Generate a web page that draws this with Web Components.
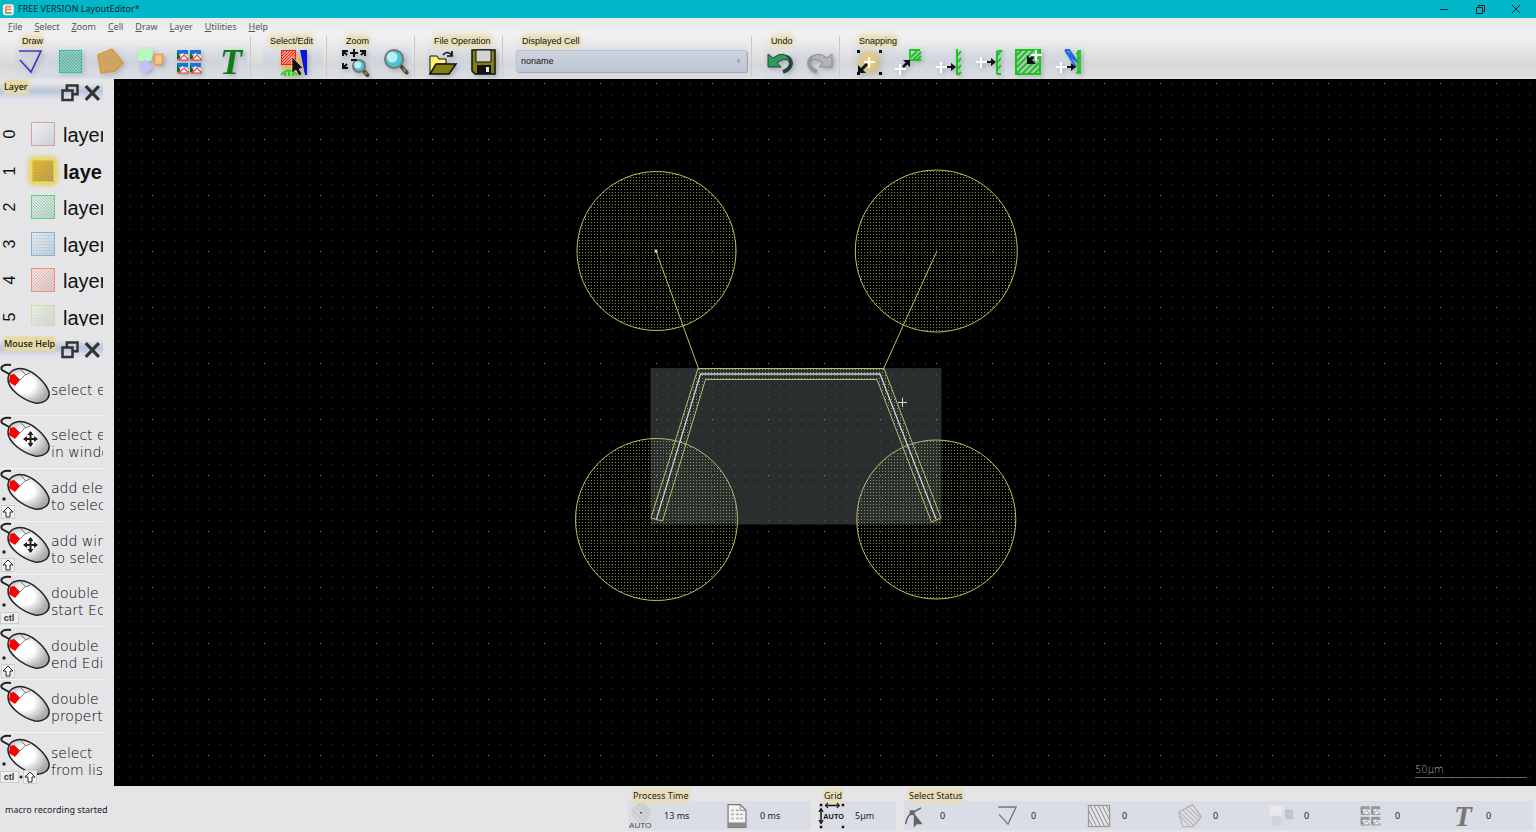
<!DOCTYPE html>
<html lang="en">
<head>
<meta charset="utf-8">
<title>LayoutEditor</title>
<style>
    html, body {
        height: 100%;
        margin: 0;
    }
    body {
        font: 9px/12px "Noto Sans", "Open Sans", sans-serif;
        color: #222;
        background: #e5e5e8;
        overflow: hidden;
    }
</style>
</head>
<body>
<layout-editor></layout-editor>

<script>
// hatch pattern helper, one per icon shadow root
const hatch = (color, path, size = 3) => `<defs><pattern id="h" width="${size}" height="${size}" patternUnits="userSpaceOnUse"><path d="${path}" stroke="${color}" fill="none"/></pattern></defs>`;

const tile = (x, y) => `<g transform="translate(${x} ${y})">
    <path d="M0 0H11V4H0Z" fill="#1277d8"/><path d="M0 2L5 9H0Z" fill="#0d6b28"/>
    <path d="M5 3L11 6V10H2Z" fill="#fff"/><path d="M0 10H11V9L7 5L2 10" fill="none" stroke="#e33" stroke-width="1.2"/></g>`;

const lens = (x, y, r) => `<path d="M${x + r * .7} ${y + r * .7}l${r * .7} ${r * .8}" stroke="#444" stroke-width="4" stroke-linecap="round"/>
    <path d="M${x + r} ${y + r}l${r * .3} ${r * .4}" stroke="#a08a28" stroke-width="2"/>
    <circle cx="${x}" cy="${y}" r="${r}" fill="#4cc3d6" stroke="#777" stroke-width="2"/>
    <circle cx="${x - r * .2}" cy="${y - r * .2}" r="${r * .6}" fill="#b5f0f6"/>`;

const plus = (x, y) => `<path d="M${x - 5} ${y}h11M${x} ${y - 5}v11" stroke="#fff" stroke-width="2"/>`;
const arrowRight = (x, y) => `<path d="M${x} ${y}h6" stroke="#111" stroke-width="2"/><path d="M${x + 4} ${y - 4}l5 4l-5 4z" fill="#111"/>`;
const corners = (a, b, c, d) => `<path d="M${a} ${b}h3v3h-3zM${c} ${b}h3v3h-3zM${a} ${d}h3v3h-3zM${c} ${d}h3v3h-3z" fill="#111"/>`;

const ICONS = {
    app: `<rect x="2" y="3" width="27" height="27" rx="6" fill="#eef4ee"/><path d="M9 9V24H23M9 9H23M9 16H23" fill="none" stroke="#ef8354" stroke-width="4"/><path d="M9 25H24" stroke="#4ab56c" stroke-width="3"/>`,
    polyline: `<path d="M4 5H26L16 26L5 14" fill="none" stroke="currentColor" stroke-width="1.7"/>`,
    rect: hatch('currentColor', 'M0 0L3 3M-1 2L1 4M2 -1L4 1') + `<rect x="4.5" y="4.5" width="22" height="22" fill="currentColor" fill-opacity=".2"/><rect x="4.5" y="4.5" width="22" height="22" fill="url(#h)" stroke="currentColor"/>`,
    polygon: hatch('currentColor', 'M0 0L3 3M-1 2L1 4M2 -1L4 1') + `<path d="M3 9L17 3L28 17L20 25L6 27Z" fill="currentColor" fill-opacity=".45"/><path d="M3 9L17 3L28 17L20 25L6 27Z" fill="url(#h)" stroke="currentColor" stroke-width="1.4"/>`,
    rectPlain: `<rect x="3" y="3" width="26" height="26" fill="#e6e6e8" stroke="#999" stroke-width="1.500"/><path d="M3 19L8 29M3 9L13 29M5 3L18 29M10 3L23 29M15 3L28 29M20 3L29 21M25 3L29 11" stroke="#999" stroke-width="1.300"/>`,
    polygonPlain: `<path d="M2 11L19 2L30 17L20 29H7Z" fill="#dfe0e4" stroke="#b2b2b4" stroke-width="1.500"/><path d="M4 16L16 29M3 11L21 28M7 9L24 25M11 7L27 22M15 5L29 19" stroke="#b2b2b4" stroke-width="1.300"/>`,
    shapes: `<path d="M3 3H19L16 15H3Z" fill="#b9f7bb"/><path d="M10 13L18 21L10 28L3 21Z" fill="#c2c2f6"/><rect x="19.500" y="8.500" width="8" height="10" fill="#f6c48c" stroke="#ee9a45" stroke-width="1.5"/>`,
    shapesPlain: `<path d="M2 3H20L16 17H2Z" fill="#e8e8ea"/><circle cx="11" cy="22" r="7" fill="#d2d3d8"/><rect x="21" y="8" width="10" height="12" fill="#c3c4c9"/>`,
    cells: tile(2, 4) + tile(15, 4) + tile(2, 17) + tile(15, 17),
    text: `<text x="5" y="28" font-family="Liberation Serif, serif" font-size="36" font-weight="bold" font-style="italic" fill="currentColor">T</text>`,
    edit: hatch('#e22', 'M0 3L3 0') + `<defs><radialGradient id="g"><stop offset=".2" stop-color="#e9bd55"/><stop offset="1" stop-color="#e9bd55" stop-opacity="0"/></radialGradient></defs>
        <circle cx="16" cy="18" r="16" fill="url(#g)"/><rect x="4.500" y="4.500" width="14" height="14" fill="#ff9a80"/><rect x="4.500" y="4.500" width="14" height="14" fill="url(#h)" stroke="#e22"/>
        <path d="M23 4H30V29H28Z" fill="#0a12e8"/><path d="M4 29Q12 20 20 29M8 25V30M12 24V30M16 25V30" fill="none" stroke="#1de01d" stroke-width="2"/>
        <path d="M15 11V27L19 24L22 30L25 28L22 23L26 22Z" fill="#111" stroke="#fff" stroke-width=".5"/>`,
    fit: lens(20, 20, 6) + `<path d="M4 10V5H9M5 6L8 9M21 5H26V10M25 6L22 9M4 17V22H9M5 21L8 18M15 3V11M11 7H19M12 14H18" fill="none" stroke="#111" stroke-width="2"/>`,
    zoom: lens(15, 13, 9),
    open: `<path d="M3 28V10H10L12 13H19V18H10Z" fill="#fff36b" stroke="#111"/><path d="M3 28L9 18H29L22 28Z" fill="#84800e" stroke="#111" stroke-width="1.500"/><path d="M16 9Q20 4 25 9M25 5V10H20" fill="none" stroke="#111" stroke-width="1.700"/>`,
    save: `<path d="M5 4H28V28H8L5 25Z" fill="#84800e" stroke="#111" stroke-width="1.500"/><path d="M9 4H24V16H9Z" fill="#d2d2d2" stroke="#111"/><path d="M10 19H24V28H10Z" fill="#111"/><path d="M19 21H22V26H19Z" fill="#e8e8e8"/>`,
    undo: `<path d="M13 13Q25 7 27 17Q27 23 19 26" fill="none" stroke="#28443c" stroke-width="4"/><path d="M4 8V21H17L13 17Q20 11 26 15Q21 3 9 12Z" fill="#2f9a5c" stroke="#1e4a36"/>`,
    redo: `<path d="M19 13Q7 7 5 17Q5 23 13 26" fill="none" stroke="#999" stroke-width="4"/><path d="M28 8V21H15L19 17Q12 11 6 15Q11 3 23 12Z" fill="#b5b5b5" stroke="#8b8b8b"/>`,
    snapGrid: `<defs><radialGradient id="g"><stop offset=".3" stop-color="#e6cb78"/><stop offset="1" stop-color="#e6cb78" stop-opacity="0"/></radialGradient></defs><circle cx="17" cy="16" r="15" fill="url(#g)"/>` + corners(5, 4, 27, 26) + plus(17, 16) + `<path d="M15 18L9 24" stroke="#111" stroke-width="3"/><path d="M6 19V27H14Z" fill="#111"/>`,
    snapCorner: `<path d="M18 15V4H28M17 14H29M19 11L26 4M21 14L29 6M25 14L29 10" fill="none" stroke="#17c817" stroke-width="1.800"/>` + plus(8, 23) + `<path d="M11 21L15 17" stroke="#111" stroke-width="2.500"/><path d="M11 14H18V21Z" fill="#111"/>`,
    snapEdge: `<path d="M25 3V29M29 5L25 10M29 12L25 17M29 19L25 24M26 29L29 26" fill="none" stroke="#17c817" stroke-width="2"/>` + plus(9, 21) + arrowRight(15, 21),
    snapPoint: `<path d="M25 5V28M25 5H29L25 10M29 12L25 17M29 19L25 24M25 28H29" fill="none" stroke="#17c817" stroke-width="2"/>` + plus(9, 16) + arrowRight(15, 16),
    snapShape: `<rect x="4" y="4" width="24" height="24" fill="none" stroke="#17c817" stroke-width="2"/><path d="M4 10L10 4M4 16L16 4M4 22L22 4M4 28L28 4M10 28L28 10M16 28L28 16M22 28L28 22" stroke="#17c817" stroke-width="2"/>` + plus(24, 9) + `<path d="M21 11L17 15" stroke="#111" stroke-width="3"/><path d="M15 9V18H24Z" fill="#111"/>`,
    snapLine: `<path d="M13 4L24 21M17 4L26 17M13 4H18M15 6L24 15" fill="none" stroke="#1d68e0" stroke-width="2"/><path d="M26 4V28M28 4V28M24 8L29 5M24 14L29 11M24 27L29 24" stroke="#17c817" stroke-width="1.600"/>` + plus(9, 21) + arrowRight(15, 21),
    timeAuto: `<circle cx="16" cy="12" r="12" fill="#d3d4d8"/><path d="M5 8L20 23M8 4L24 20M12 1L27 16M17 1L28 12" stroke="#bbb"/><text x="15" y="31" text-anchor="middle" font-family="Liberation Sans, sans-serif" font-size="10" fill="#444">AUTO</text><circle cx="16" cy="12" r="1"/>`,
    sheet: `<path d="M5 2H20L27 9V30H5Z" fill="#f4f4f4" stroke="#777" stroke-width="1.500"/><path d="M20 3V9H26" fill="none" stroke="#777"/><path d="M9 9H12M15 9H18M9 14H12M15 14H18M20 14H23M9 19H12M15 19H18M20 19H23" stroke="#aaa" stroke-width="2"/><path d="M5 24H27V30H5Z" fill="#8a8a8a"/>`,
    gridAuto: corners(1, 1, 28, 28) + `<path d="M8 3H25M2.500 7V25" stroke="#111" stroke-width="1.800"/><path d="M11 0L8 3L11 6M22 0L25 3L22 6M0 11L2.500 7L5 11M0 21L2.500 25L5 21" fill="none" stroke="#111" stroke-width="1.500"/><text x="18" y="20" text-anchor="middle" font-family="Liberation Sans, sans-serif" font-size="9" font-weight="bold" fill="#111">AUTO</text>`,
    node: `<path d="M2 26Q4 15 10 12L21 6" fill="none" stroke="#666" stroke-width="1.800"/><path d="M7 9H13V15H7Z" fill="#666"/><path d="M12 12V30L16 26H23Z" fill="#666"/>`,
    restore: `<path d="M11 11V4H28V18H21M4 12H20V27H4Z" fill="none" stroke="#333" stroke-width="4"/>`,
    close: `<path d="M6 5L27 27M27 5L6 27" stroke="#333" stroke-width="5" fill="none"/>`
};

/** Icon drawn from the ICONS table. */
class UiIcon extends HTMLElement {
    constructor() {
        super();
        this.attachShadow({ mode: 'open' });
    }

    connectedCallback() {
        this.shadowRoot.innerHTML = `
            <style>
                :host { display: block; width: 32px; height: 32px; flex: none; }
                svg { display: block; width: 100%; height: 100%; overflow: visible; }
            </style>
            <svg viewBox="0 0 32 32" aria-hidden="true">${ICONS[this.getAttribute('name')] || ''}</svg>
        `;
    }
}

/** Window title row with its three window controls. */
class TitleBar extends HTMLElement {
    constructor() {
        super();
        this.attachShadow({ mode: 'open' });
        this.shadowRoot.innerHTML = `
            <style>
                :host { display: flex; align-items: center; height: 18px; padding-right: 2px; background: #02b8c8; color: #0b2529; }
                ui-icon { width: 13px; height: 13px; margin: 0 3px 0 2px; }
                .title { flex: 1; }
                button { width: 36px; height: 18px; padding: 0; border: 0; background: none; display: grid; place-items: center; }
                svg { width: 10px; height: 10px; fill: none; stroke: #0b2529; }
            </style>
            <ui-icon name="app"></ui-icon>
            <span class="title"><slot></slot></span>
            <button aria-label="Minimize"><svg><path d="M1 5.500H9"/></svg></button>
            <button aria-label="Restore"><svg><path d="M1.500 3.500H7.500V9.500H1.500ZM3.500 3V1.500H9.500V7.500H8"/></svg></button>
            <button aria-label="Close"><svg><path d="M1 1L9 9M9 1L1 9"/></svg></button>
        `;
    }
}

class MenuBar extends HTMLElement {
    constructor() {
        super();
        this.attachShadow({ mode: 'open' });
    }

    connectedCallback() {
        const items = this.getAttribute('items').split(',');
        this.shadowRoot.innerHTML = `
            <style>
                :host { display: block; }
                nav { display: flex; gap: 12px; height: 18px; align-items: center; padding-left: 8px; }
                button { border: 0; padding: 0; background: none; font: inherit; color: #555; }
                u { text-underline-offset: 1px; }
            </style>
            <nav>${items.map(t => `<button><u>${t[0]}</u>${t.slice(1)}</button>`).join('')}</nav>
        `;
    }
}

/** Captioned group of the toolbar, tools are slotted in. */
class ToolGroup extends HTMLElement {
    constructor() {
        super();
        this.attachShadow({ mode: 'open' });
    }

    connectedCallback() {
        this.shadowRoot.innerHTML = `
            <style>
                :host { display: block; box-sizing: border-box; position: relative; font-family: "Liberation Sans", Arial, sans-serif; }
                :host::after { content: ""; position: absolute; right: 0; top: 0; bottom: 2px; border-right: 1px solid #c8c9cc; }
                :host(:last-child)::after { border: 0; }
                .caption { display: block; height: 10px; line-height: 10px; padding-left: 11px; color: #111; }
                .caption span { background: #e9dfba; box-shadow: 0 0 4px 2px #e9dfba; border-radius: 4px; }
                .tools { display: flex; justify-content: center; margin: 0 4px; height: 32px; background: linear-gradient(#e3e5ea, #d0d4dc 45%, #dadde3); }
            </style>
            <span class="caption"><span>${this.getAttribute('caption')}</span></span>
            <div class="tools"><slot></slot></div>
        `;
    }
}

class ToolButton extends HTMLElement {
    constructor() {
        super();
        this.attachShadow({ mode: 'open' });
    }

    connectedCallback() {
        const icon = this.getAttribute('icon');
        this.shadowRoot.innerHTML = `
            <style>
                :host { display: block; }
                button { display: grid; place-items: center; width: 40px; height: 32px; padding: 0; border: 0; background: none; color: inherit; }
                ui-icon { filter: drop-shadow(2px 2px 2px rgba(60, 70, 90, .3)); }
            </style>
            <button aria-label="${icon}"><ui-icon name="${icon}"></ui-icon></button>
        `;
    }
}

class CellSelect extends HTMLElement {
    constructor() {
        super();
        this.attachShadow({ mode: 'open' });
        this.shadowRoot.innerHTML = `
            <style>
                :host { display: block; position: relative; margin-top: 4px; }
                select { appearance: none; width: 231px; height: 22px; padding: 0 4px; border: 1px solid #bcc2cd; border-radius: 2px;
                    background: linear-gradient(#ccd3de, #bec7d5); box-shadow: 1px 1px 1px #9fa6b3; font: inherit; color: #111; }
                svg { position: absolute; right: 6px; top: 9px; width: 5px; height: 5px; pointer-events: none; }
            </style>
            <select aria-label="Displayed Cell"><option>noname</option></select>
            <svg><path d="M1 1H4M1 3H4" stroke="#6c8db8"/></svg>
        `;
    }
}

/** Dock panel: caption, float and close buttons, slotted content. */
class DockPanel extends HTMLElement {
    constructor() {
        super();
        this.attachShadow({ mode: 'open' });
    }

    connectedCallback() {
        this.shadowRoot.innerHTML = `
            <style>
                :host { display: flex; flex-direction: column; min-height: 0; }
                header { display: flex; align-items: center; height: 27px; flex: none;
                    background: linear-gradient(#e5e5e8 4px, #b9c5da 12px, #d8dde8 18px, #e5e5e8 22px); }
                h2 { flex: 1; align-self: flex-start; margin: 2px 0 0 4px; font-size: 9px; line-height: 11px; font-weight: 500; color: #111; white-space: nowrap; }
                h2 span { background: #e6d9a4; box-shadow: 0 0 3px 1px #e6d9a4; border-radius: 3px; }
                button { width: 22px; height: 22px; padding: 0; border: 0; background: none; display: grid; place-items: center; }
                ui-icon { width: 20px; height: 20px; }
            </style>
            <header>
                <h2><span>${this.getAttribute('caption')}</span></h2>
                <button aria-label="Float"><ui-icon name="restore"></ui-icon></button>
                <button aria-label="Close"><ui-icon name="close"></ui-icon></button>
            </header>
            <slot></slot>
        `;
    }
}

const LAYERS = [
    { color: '#d9a0a0', path: '' },
    { color: '#e8e83c', path: 'M0 1.500H3M1.500 0V3', active: true },
    { color: '#62cf84', path: 'M0 0L3 3' },
    { color: '#82b4d8', path: 'M0 .5H1.500M2 2H3' },
    { color: '#f58f7c', path: 'M0 3L3 0' },
    { color: '#cfe0a4', path: 'M0 1H3' }
];

class LayerList extends HTMLElement {
    constructor() {
        super();
        this.attachShadow({ mode: 'open' });
        this.shadowRoot.innerHTML = `
            <style>
                :host { display: block; height: 210px; margin: 10px 0; overflow: hidden; font: 20px/24px "Liberation Sans", Arial, sans-serif; color: #111; }
                ul { display: grid; grid-template-rows: repeat(6, 1fr); height: 219px; margin: 0; padding: 0; list-style: none; }
                li { display: flex; align-items: center; white-space: nowrap; }
                .num { width: 20px; text-align: center; font-size: 16px; line-height: 20px; transform: rotate(-90deg); }
                svg { width: 24px; height: 24px; margin: 0 8px 0 11px; flex: none; }
                .name { padding-top: 2px; }
                .active .name { font-weight: bold; }
                .active svg { box-shadow: 0 0 5px 3px #e6cd78; background: #e6cd78; border-radius: 4px; }
            </style>
            <ul>${LAYERS.map((l, i) => `
                <li class="${l.active ? 'active' : ''}">
                    <span class="num">${i}</span>
                    <svg>
                        <defs>
                            <linearGradient id="g${i}" x2="1" y2="1"><stop stop-color="${l.active ? '#f4bf2c' : '#f0f0f2'}"/><stop offset="1" stop-color="${l.active ? '#a89468' : '#ccd0d6'}"/></linearGradient>
                            <pattern id="p${i}" width="3" height="3" patternUnits="userSpaceOnUse"><path d="${l.path}" stroke="${l.active ? '#c9a63a' : l.color}" stroke-width=".7"/></pattern>
                        </defs>
                        <rect x=".5" y=".5" width="23" height="23" fill="url(#g${i})"/>
                        <rect x=".5" y=".5" width="23" height="23" fill="url(#p${i})" stroke="${l.color}" stroke-width="${l.active ? 2 : 1}"/>
                    </svg>
                    <span class="name">layer</span>
                </li>`).join('')}
            </ul>
        `;
    }
}

const MOUSE_HELP = [
    { lines: ['select element'] },
    { lines: ['select elements', 'in window'], move: true },
    { lines: ['add element', 'to selection'], keys: ['shift'] },
    { lines: ['add window', 'to selection'], move: true, keys: ['shift'] },
    { lines: ['double click', 'start Edit'], keys: ['ctl'] },
    { lines: ['double click', 'end Edit'], keys: ['shift'] },
    { lines: ['double click', 'property'] },
    { lines: ['select', 'from list'], keys: ['ctl', 'shift'] }
];

class MouseHelp extends HTMLElement {
    constructor() {
        super();
        this.attachShadow({ mode: 'open' });
        this.shadowRoot.innerHTML = `
            <style>
                :host { display: block; flex: 1; min-height: 0; overflow: hidden; }
                ul { display: grid; grid-auto-rows: 1fr; height: 100%; margin: 0; padding: 0; list-style: none; }
                li { display: flex; align-items: center; min-height: 0; border-bottom: 1px solid #f4f4f6; box-sizing: border-box;
                    font: 200 14px/17px "DejaVu Sans", sans-serif; color: #000; white-space: nowrap; }
                li:last-child { border: 0; }
                svg { width: 51px; height: 51px; flex: none; }
                p { margin: 4px 0 0; }
            </style>
            <ul>${MOUSE_HELP.map(h => this.row(h)).join('')}</ul>
        `;
    }

    row({ lines, move, keys = [] }) {
        const shiftX = keys.length > 1 ? 23 : 1;
        return `<li>
            <svg viewBox="0 0 51 51" aria-hidden="true">
                <defs><radialGradient id="m" cx=".4" cy=".45" r=".6"><stop offset=".4" stop-color="#fff"/><stop offset="1" stop-color="#aaa"/></radialGradient></defs>
                <path d="M11 2C3 1 0 4 2 7L11 12" fill="none" stroke="#222" stroke-width="2"/>
                <path d="M8 15C9 8 16 4 24 6C35 9 46 20 49 29C50 36 44 41 35 40C23 37 7 26 8 15Z" fill="url(#m)" stroke="#222" stroke-width="1.500"/>
                <path d="M10 12L14 11L20 17L15 23L9 19Z" fill="#f00"/>
                <path d="M14 11L20 17Q24 11 30 10M20 6L26 12" fill="none" stroke="#777"/>
                ${move ? '<path d="M24 23H37M30.500 16V30" stroke="#222" stroke-width="2"/><path d="M30.500 15l3 4h-6zM30.500 31l3-4h-6zM23 23l4-3v6zM38 23l-4-3v6z" fill="#222"/>' : ''}
                ${keys.length ? '<circle cx="4" cy="30" r="1.700" fill="#222"/>' : ''}
                ${keys.includes('ctl') ? '<rect x=".5" y="37.500" width="18" height="11" fill="#eee" stroke="#ccc"/><text x="9" y="46" text-anchor="middle" font-family="Liberation Sans, sans-serif" font-size="9" font-weight="bold" fill="#333">ctl</text>' : ''}
                ${keys.includes('shift') ? `<g transform="translate(${shiftX} 36)"><rect x=".5" y=".5" width="13" height="13" fill="#eee" stroke="#ccc"/><path d="M7 2L12 7H9V12H5V7H2Z" fill="#fff" stroke="#222"/></g>` : ''}
                ${keys.length > 1 ? '<circle cx="21" cy="43" r="1.500" fill="#222"/>' : ''}
            </svg>
            <p>${lines.join('<br>')}</p>
        </li>`;
    }
}

/** Drawing area. Scene coordinates are window pixels, shifted by the area's origin. */
class LayoutCanvas extends HTMLElement {
    constructor() {
        super();
        this.attachShadow({ mode: 'open' });
        const circles = [[656.5, 251, 79.5], [936.3, 251, 81], [656.5, 519.5, 81], [936.3, 519.5, 79.5]];
        const wire = 'M651 518L698 368.500H884L941 518L931.500 522L877 379.500H705.500L662.500 521Z';
        this.shadowRoot.innerHTML = `
            <style>
                :host { display: block; position: relative; background: #000; overflow: hidden; }
                svg { display: block; width: 100%; height: 100%; }
                .outline { stroke: #b9c15a; fill: url(#fill); }
                .scale { position: absolute; right: 9px; bottom: 8px; width: 112px; border-bottom: 1px solid #666; font: 200 10px/15px "DejaVu Sans", sans-serif; color: #aaa; }
            </style>
            <svg role="img" aria-label="Layout drawing">
                <defs>
                    <pattern id="minor" x="656" y="251" width="11.2" height="11.2" patternUnits="userSpaceOnUse"><rect width="1.200" height="1.200" fill="#363636"/></pattern>
                    <pattern id="major" x="656" y="251" width="56" height="56" patternUnits="userSpaceOnUse"><rect width="1" height="1" fill="#7a7a7a"/></pattern>
                    <pattern id="fill" width="3" height="3" patternUnits="userSpaceOnUse"><rect width="1" height="1" fill="#858b42"/></pattern>
                </defs>
                <g transform="translate(-114 -79)">
                    <rect x="114" y="79" width="100%" height="100%" fill="url(#minor)"/>
                    <rect x="114" y="79" width="100%" height="100%" fill="url(#major)"/>
                    ${circles.map(([x, y, r]) => `<circle class="outline" cx="${x}" cy="${y}" r="${r}"/>`).join('')}
                    <path d="M656 251L699 370M937 251L883 370" stroke="#b9c15a"/>
                    <circle cx="656" cy="251" r="1.500" fill="#ddd"/>
                    <path class="outline" d="${wire}"/>
                    <path d="M656.500 519L700.500 374H880L936 519" fill="none" stroke="#cfe0e4" stroke-width="1.300"/>
                    <rect x="650.500" y="368" width="291" height="156.500" fill="#a8b2b6" fill-opacity=".26"/>
                    <path d="M898 402.500H907M902.500 398V407" stroke="#ddd"/>
                </g>
            </svg>
            <div class="scale">50µm</div>
        `;
    }
}

class StatusGroup extends HTMLElement {
    constructor() {
        super();
        this.attachShadow({ mode: 'open' });
    }

    connectedCallback() {
        this.shadowRoot.innerHTML = `
            <style>
                :host { display: block; }
                .caption { display: block; line-height: 11px; padding-left: 5px; color: #222; }
                .caption span { background: #e8ddb8; box-shadow: 0 0 3px 1px #e8ddb8; border-radius: 3px; }
                .items { display: flex; height: 29px; background: #dadde5; }
            </style>
            <span class="caption"><span>${this.getAttribute('caption')}</span></span>
            <div class="items"><slot></slot></div>
        `;
    }
}

class StatusItem extends HTMLElement {
    constructor() {
        super();
        this.attachShadow({ mode: 'open' });
    }

    connectedCallback() {
        this.shadowRoot.innerHTML = `
            <style>
                :host { display: flex; align-items: center; gap: 10px; flex: 0 0 91px; white-space: nowrap; }
                :host([wide]) { flex-basis: 96px; }
                :host(:last-child) { flex: none; }
                :host([faded]) ui-icon { filter: grayscale(1); opacity: .6; }
                ui-icon { width: 26px; height: 26px; color: #777; }
            </style>
            <ui-icon name="${this.getAttribute('icon')}"></ui-icon>
            <span><slot></slot></span>
        `;
    }
}

class LayoutEditor extends HTMLElement {
    constructor() {
        super();
        this.attachShadow({ mode: 'open' });
        this.shadowRoot.innerHTML = `
            <style>
                :host { display: flex; flex-direction: column; height: 100vh; }
                .top { background: linear-gradient(#e7e8e8, #f1f1f3 28%, #e4e4e5 55%, #d6d7d8 78%, #e0e1e2); }
                .toolbar { display: flex; gap: 8px; padding-left: 11px; height: 43px; }
                .main { display: flex; flex: 1; min-height: 0; }
                aside { display: flex; flex-direction: column; flex: none; width: 103px; padding-right: 11px; overflow: hidden; background: #e5e5e8; }
                dock-panel { width: 103px; overflow: hidden; }
                dock-panel:last-child { flex: 1; }
                layout-canvas { flex: 1; }
                footer { display: flex; gap: 8px; height: 42px; padding: 4px 3px 0 5px; background: #e5e5e7; }
                .message { flex: 1; align-self: center; padding-bottom: 2px; }
            </style>
            <title-bar>FREE VERSION LayoutEditor*</title-bar>
            <div class="top">
                <menu-bar items="File,Select,Zoom,Cell,Draw,Layer,Utilities,Help"></menu-bar>
                <div class="toolbar">
                    <tool-group caption="Draw" style="width: 240px">
                        <tool-button icon="polyline" style="color: #4334c8"></tool-button>
                        <tool-button icon="rect" style="color: #35bf98"></tool-button>
                        <tool-button icon="polygon" style="color: #dd962e"></tool-button>
                        <tool-button icon="shapes"></tool-button>
                        <tool-button icon="cells"></tool-button>
                        <tool-button icon="text" style="color: #0b7d12"></tool-button>
                    </tool-group>
                    <tool-group caption="Select/Edit" style="width: 68px">
                        <tool-button icon="edit"></tool-button>
                    </tool-group>
                    <tool-group caption="Zoom" style="width: 80px">
                        <tool-button icon="fit"></tool-button>
                        <tool-button icon="zoom"></tool-button>
                    </tool-group>
                    <tool-group caption="File Operation" style="width: 80px">
                        <tool-button icon="open"></tool-button>
                        <tool-button icon="save"></tool-button>
                    </tool-group>
                    <tool-group caption="Displayed Cell" style="width: 241px">
                        <cell-select></cell-select>
                    </tool-group>
                    <tool-group caption="Undo" style="width: 80px">
                        <tool-button icon="undo"></tool-button>
                        <tool-button icon="redo"></tool-button>
                    </tool-group>
                    <tool-group caption="Snapping" style="width: 240px">
                        <tool-button icon="snapGrid"></tool-button>
                        <tool-button icon="snapCorner"></tool-button>
                        <tool-button icon="snapEdge"></tool-button>
                        <tool-button icon="snapPoint"></tool-button>
                        <tool-button icon="snapShape"></tool-button>
                        <tool-button icon="snapLine"></tool-button>
                    </tool-group>
                </div>
            </div>
            <div class="main">
                <aside>
                    <dock-panel caption="Layer"><layer-list></layer-list></dock-panel>
                    <dock-panel caption="Mouse Help"><mouse-help></mouse-help></dock-panel>
                </aside>
                <layout-canvas></layout-canvas>
            </div>
            <footer>
                <span class="message">macro recording started</span>
                <status-group caption="Process Time" style="width: 183px">
                    <status-item wide icon="timeAuto">13 ms</status-item>
                    <status-item wide icon="sheet">0 ms</status-item>
                </status-group>
                <status-group caption="Grid" style="width: 77px">
                    <status-item icon="gridAuto">5µm</status-item>
                </status-group>
                <status-group caption="Select Status" style="width: 629px">
                    <status-item icon="node">0</status-item>
                    <status-item icon="polyline">0</status-item>
                    <status-item icon="rectPlain">0</status-item>
                    <status-item icon="polygonPlain">0</status-item>
                    <status-item icon="shapesPlain">0</status-item>
                    <status-item faded icon="cells">0</status-item>
                    <status-item icon="text">0</status-item>
                </status-group>
            </footer>
        `;
    }
}

customElements.define('ui-icon', UiIcon);
customElements.define('title-bar', TitleBar);
customElements.define('menu-bar', MenuBar);
customElements.define('tool-group', ToolGroup);
customElements.define('tool-button', ToolButton);
customElements.define('cell-select', CellSelect);
customElements.define('dock-panel', DockPanel);
customElements.define('layer-list', LayerList);
customElements.define('mouse-help', MouseHelp);
customElements.define('layout-canvas', LayoutCanvas);
customElements.define('status-group', StatusGroup);
customElements.define('status-item', StatusItem);
customElements.define('layout-editor', LayoutEditor);
</script>
</body>
</html>
